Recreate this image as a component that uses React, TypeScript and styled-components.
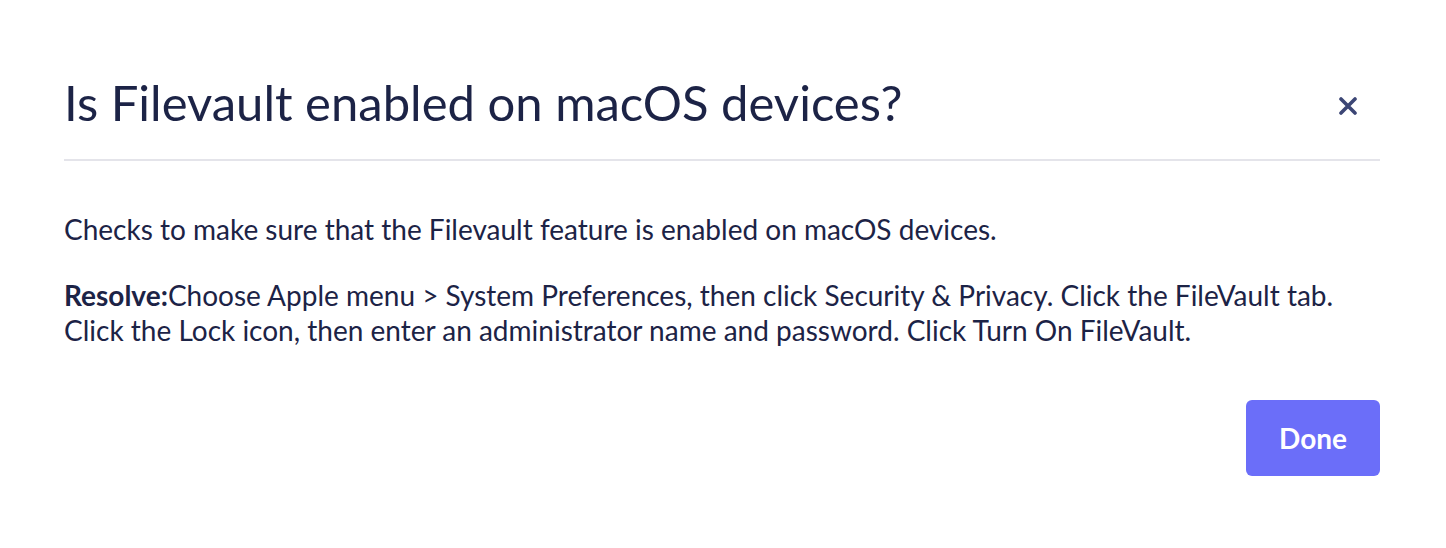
import React from "react";
import styled, { createGlobalStyle } from "styled-components";

const GlobalStyle = createGlobalStyle`
  html, body { margin: 0; padding: 0; background: #ffffff; }
  body { font-family: "Lato", "Noto Sans", sans-serif; color: #1c2346; }
`;

const Modal = styled.div`
  box-sizing: border-box;
  width: 1446px;
  height: 548px;
  padding: 0 66px 0 64px;
  background: #ffffff;
  display: flex;
  flex-direction: column;
`;

const Header = styled.div`
  display: flex;
  align-items: flex-start;
  justify-content: space-between;
  padding-top: 72px;
  padding-bottom: 27px;
  border-bottom: 2px solid #e4e4ea;
`;

const Title = styled.h1`
  margin: 0;
  font-size: 49px;
  font-weight: 400;
  line-height: 60px;
  color: #1c2346;
`;

const CloseButton = styled.button`
  border: none;
  background: transparent;
  padding: 0;
  margin-top: 25px;
  margin-right: 23px;
  width: 18px;
  height: 18px;
  display: flex;
  align-items: center;
  justify-content: center;
  cursor: pointer;
  color: #3c4675;
`;

const Body = styled.div`
  padding-top: 51px;
  display: flex;
  flex-direction: column;
  gap: 31px;
`;

const Paragraph = styled.p`
  margin: 0;
  max-width: 1270px;
  font-size: 28px;
  line-height: 35px;
  color: #1c2346;
`;

const Strong = styled.strong`
  font-weight: 700;
`;

const Footer = styled.div`
  display: flex;
  justify-content: flex-end;
  padding-top: 52px;
`;

const DoneButton = styled.button`
  width: 134px;
  height: 76px;
  border: none;
  border-radius: 6px;
  background: #6b6ef9;
  color: #ffffff;
  font-family: "Lato", "Noto Sans", sans-serif;
  font-size: 28px;
  font-weight: 700;
  cursor: pointer;
`;

export default function App() {
  return (
    <>
      <GlobalStyle />
      <Modal>
        <Header>
          <Title>Is Filevault enabled on macOS devices?</Title>
          <CloseButton aria-label="Close">
            <svg width="18" height="18" viewBox="0 0 18 18">
              <path d="M2 2 L16 16 M16 2 L2 16" stroke="currentColor" strokeWidth="3.6" strokeLinecap="round" />
            </svg>
          </CloseButton>
        </Header>
        <Body>
          <Paragraph>Checks to make sure that the Filevault feature is enabled on macOS devices.</Paragraph>
          <Paragraph>
            <Strong>Resolve:</Strong>Choose Apple menu &gt; System Preferences, then click Security &amp; Privacy. Click the FileVault tab. Click the Lock icon, then enter an administrator name and password. Click Turn On FileVault.
          </Paragraph>
        </Body>
        <Footer>
          <DoneButton>Done</DoneButton>
        </Footer>
      </Modal>
    </>
  );
}
